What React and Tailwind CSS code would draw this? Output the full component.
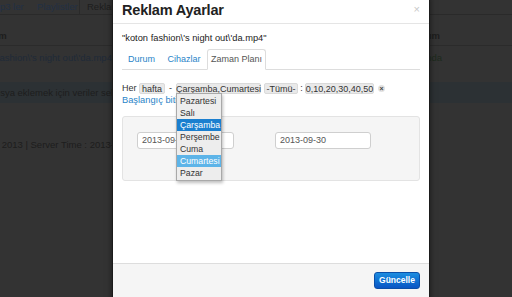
import React from 'react'

const days = ['Pazartesi','Salı','Çarşamba','Perşembe','Cuma','Cumartesi','Pazar']

function Pill({w, children}){
  return <span className={'inline-flex justify-center whitespace-nowrap h-[11px] leading-[10px] bg-[#e9e9e9] border border-[#dadada] rounded-[2px] text-[#333] ' + w}>{children}</span>
}

export default function App(){
  return (
    <div className="relative w-[512px] h-[297px] overflow-hidden bg-[#333333] text-[9.5px] text-[#1d1d1d] whitespace-nowrap" style={{fontFamily:'"Liberation Sans", Arial, sans-serif'}}>
      {/* page behind the overlay */}
      <div className="flex h-[15px] border-b border-[#2a2a2a]">
        <div className="w-[26px] -ml-[8px] leading-[13px] text-[#223044]">Mp3 ler</div>
        <div className="ml-[19px] w-[42px] leading-[13px] text-[#223044]">Playlistler</div>
        <div className="ml-[0px] pl-[7px] border-l border-r border-[#2a2a2a] w-[60px] leading-[13px] bg-[#333]">Reklam</div>
      </div>
      <div className="flex justify-between h-[31px] border-b border-[#2b2b2b] pt-[14px] font-bold">
        <span className="-ml-[24px]">Durum</span>
        <span className="mr-[72px]">Durum</span>
      </div>
      <div className="flex justify-between h-[36px] pt-[5px]">
        <span className="-ml-[29px] text-[#1f2a38]">koton fashion\'s night out\'da.mp4</span>
        <span className="mr-[70px] text-[#1d2a1d]">Yayında</span>
      </div>
      <div className="h-[21px] bg-[#2c3134] leading-[21px] pl-0"><span className="-ml-[12px] inline-block">Dosya eklemek için veriler sekmesini kullanın</span></div>
      <div className="mt-[36px] leading-[12px]"><span className="-ml-[8px] inline-block">© 2013 | Server Time : 2013-10-24 12:00</span></div>

      {/* modal */}
      <div className="absolute left-[112px] -top-[4px] w-[318px] h-[306px] bg-white border border-[#1b1b1b] flex flex-col shadow-[0_0_6px_rgba(0,0,0,0.5)]">
        <div className="h-[27px] flex items-end justify-between px-[9px] pb-[4px] border-b border-[#e5e5e5]">
          <h3 className="text-[14.5px] font-bold text-[#222] leading-[18px] tracking-[-0.2px]">Reklam Ayarlar</h3>
          <span className="text-[11px] text-[#c8c8c8] leading-[14px] mb-[3px]">×</span>
        </div>
        <div className="flex-1 relative px-[9px] pt-[8px]">
          <div className="text-[#222] text-[9.3px] leading-[12px]">"koton fashion\'s night out\'da.mp4"</div>
          <div className="mt-[5px] flex items-end h-[21px] border-b border-[#dddddd] text-[9px] text-[#2a84c8]">
            <div className="w-[39px] text-center leading-[20px]">Durum</div>
            <div className="w-[46px] text-center leading-[20px]">Cihazlar</div>
            <div className="w-[59px] text-center leading-[19px] h-[21px] -mb-px bg-white border border-[#ddd] border-b-white rounded-t-[3px] text-[#555]">Zaman Planı</div>
          </div>
          <div className="mt-[12px] h-[12px] flex items-center text-[9px] text-[#333] leading-[12px]">
            <span className="w-[17px]">Her</span>
            <Pill w="w-[26px]">hafta</Pill>
            <span className="w-[11px] text-center">-</span>
            <Pill w="w-[85px]">Çarşamba,Cumartesi</Pill>
            <span className="w-[3px]"></span>
            <Pill w="w-[34px]">-Tümü-</Pill>
            <span className="w-[7px] text-center">:</span>
            <Pill w="w-[69px]">0,10,20,30,40,50</Pill>
            <span className="ml-[4px] w-[7px] h-[7px] rounded-full bg-[#e2e2e2] text-[7px] leading-[7px] text-center font-bold text-[#444]">×</span>
          </div>
          <div className="text-[9.3px] leading-[12px] text-[#2a84c8]">Başlangıç bitiş</div>
          <div className="mt-[10px] h-[65px] bg-[#f5f5f5] border border-[#e3e3e3] rounded-[3px] flex items-start gap-[41px] pl-[14px] pt-[15px]">
            <div className="w-[97px] h-[17px] bg-white border border-[#cfcfcf] rounded-[3px] px-[4px] leading-[15px] text-[9px] text-[#555]">2013-09-16</div>
            <div className="w-[96px] h-[17px] bg-white border border-[#cfcfcf] rounded-[3px] px-[4px] leading-[15px] text-[9px] text-[#555]">2013-09-30</div>
          </div>

          <div className="absolute left-[63px] top-[69px] w-[46px] bg-[#ededed] border border-[#a9a9a9] shadow-[1px_2px_3px_rgba(0,0,0,0.25)] py-[1px] text-[8.7px]">
            {days.map(d=>(
              <div key={d} className={'h-[12px] leading-[12px] px-[3px] ' + (d==='Çarşamba' ? 'bg-[#1b7fcf] text-white' : d==='Cumartesi' ? 'bg-[#5db4e8] text-white' : 'text-[#333]')}>{d}</div>
            ))}
          </div>
        </div>
        <div className="h-[38px] bg-[#f5f5f5] border-t border-[#dddddd] flex justify-end items-start pt-[8px] pr-[9px]">
          <button className="w-[46px] h-[17px] rounded-[3px] border border-[#0b4fa8] bg-gradient-to-b from-[#1d8de0] to-[#0b55c4] text-white text-[8.5px] font-bold leading-[15px]">Güncelle</button>
        </div>
      </div>
    </div>
  )
}
